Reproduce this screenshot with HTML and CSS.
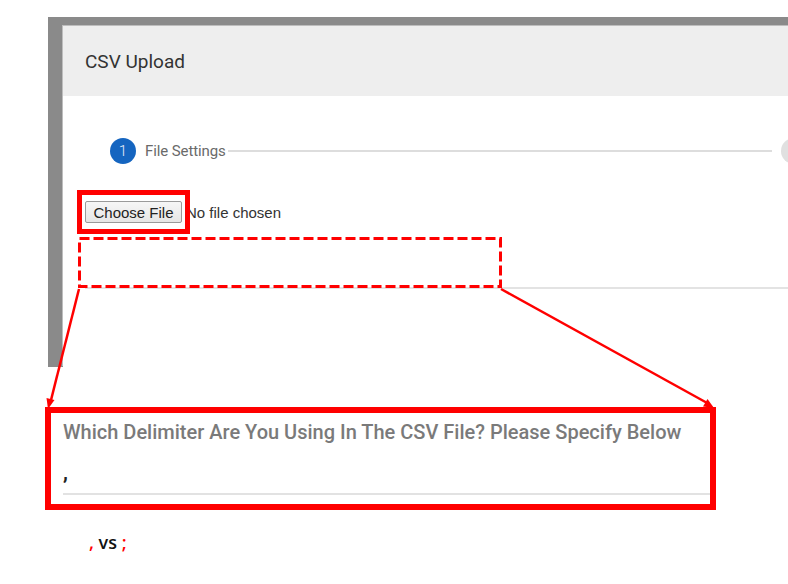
FILE: index.html
```html
<!DOCTYPE html>
<html>
<head>
<meta charset="utf-8">
<link rel="stylesheet" href="styles.css">
</head>
<body>
<div class="canvas">
  <section class="shot">
    <div class="dialog">
      <div class="dialog-header">CSV Upload</div>
      <div class="dialog-body">
        <div class="stepper">
          <span class="step-dot active">1</span>
          <span class="step-label">File Settings</span>
          <span class="step-line"></span>
          <span class="step-dot"></span>
        </div>
        <div class="file-row">
          <button class="file-btn" type="button">Choose File</button>
          <span class="file-status">No file chosen</span>
        </div>
        <div class="field"></div>
      </div>
    </div>
  </section>

  <section class="zoom-panel">
    <div class="zoom-label">Which Delimiter Are You Using In The CSV File? Please Specify Below</div>
    <div class="zoom-input">,</div>
  </section>

  <p class="caption"><span class="red">,</span> vs <span class="red">;</span></p>

  <div class="mark mark-button"></div>
  <svg class="arrows" width="788" height="584" viewBox="0 0 788 584">
    <rect x="79.5" y="238.5" width="421" height="48" fill="none" stroke="#ff0000" stroke-width="3" stroke-dasharray="10 4"/>
    <g stroke="#ff0000" stroke-width="2.5" fill="none">
      <line x1="79" y1="289" x2="50.5" y2="402"/>
      <line x1="501" y1="289" x2="709" y2="404"/>
    </g>
    <g fill="#ff0000">
      <polygon points="48,409 46.5,398 54.5,400"/>
      <polygon points="714,408 703,406.5 707.5,399"/>
    </g>
  </svg>
</div>
</body>
</html>
```

FILE: styles.css
```css
html, body {
  margin: 0;
  padding: 0;
  background: #ffffff;
}

.canvas {
  position: relative;
  width: 788px;
  height: 584px;
  overflow: hidden;
  font-family: Roboto, "Liberation Sans", sans-serif;
}

.shot {
  margin: 17px 0 0 48px;
  height: 350px;
  width: 740px;
  background: #8a8a8a;
  padding: 9px 0 0 15px;
  box-sizing: border-box;
  overflow: hidden;
}

.dialog {
  width: 744px;
  flex: none;
  height: 100%;
  background: #ffffff;
  box-shadow: -1px -1px 0 #bdbdbd;
  display: flex;
  flex-direction: column;
}

.dialog-header {
  height: 70px;
  flex: none;
  background: #eeeeee;
  display: flex;
  align-items: center;
  padding-left: 22px;
  font-size: 19px;
  color: #333333;
}

.dialog-body {
  padding: 42px 0 0 0;
}

.stepper {
  display: flex;
  align-items: center;
  padding-left: 47px;
  height: 26px;
}

.step-dot {
  flex: none;
  width: 26px;
  height: 26px;
  border-radius: 50%;
  background: #e0e0e0;
  color: #e8eef8;
  font-size: 15px;
  display: flex;
  align-items: center;
  justify-content: center;
}

.step-dot.active {
  background: #1565c0;
  font-weight: 300;
}

.step-label {
  margin-left: 9px;
  font-size: 15px;
  color: #6a6a6a;
  letter-spacing: -0.1px;
}

.step-line {
  flex: 1;
  height: 2px;
  background: #dddddd;
  margin: 0 9px 0 2px;
}

.file-row {
  display: flex;
  align-items: center;
  margin-top: 37px;
  padding-left: 22px;
  height: 22px;
}

.file-btn {
  width: 97px;
  height: 22px;
  padding: 0;
  font-family: "Liberation Sans", Arial, sans-serif;
  font-size: 15px;
  color: #222222;
  background: linear-gradient(#f6f6f6, #e6e6e6);
  border: 1px solid #9a9a9a;
  border-radius: 2px;
}

.file-status {
  margin-left: 4px;
  font-family: "Liberation Sans", Arial, sans-serif;
  font-size: 15px;
  color: #333333;
}

.field {
  margin: 14px 0 0 22px;
  height: 50px;
  border-bottom: 2px solid #e3e3e3;
}

.zoom-panel {
  margin: 40px 0 0 45px;
  width: 671px;
  height: 103px;
  box-sizing: border-box;
  border: 6px solid #ff0000;
  padding: 6px 0 0 12px;
}

.zoom-label {
  font-size: 20px;
  line-height: 26px;
  font-weight: 500;
  color: #7a7a7a;
  white-space: nowrap;
}

.zoom-input {
  margin-top: 14px;
  height: 36px;
  box-sizing: border-box;
  border-bottom: 2px solid #e2e2e2;
  font-size: 20px;
  line-height: 26px;
  font-weight: 700;
  color: #222222;
}

.caption {
  margin: 20px 0 0 89px;
  font-family: "Open Sans", "Liberation Sans", sans-serif;
  font-size: 18px;
  line-height: 24px;
  font-weight: 600;
  color: #111111;
}

.caption .red {
  color: #ff0000;
}

.mark {
  position: absolute;
  box-sizing: border-box;
}

.mark-button {
  left: 77px;
  top: 190px;
  width: 113px;
  height: 44px;
  border: 5px solid #ff0000;
}

.arrows {
  position: absolute;
  left: 0;
  top: 0;
  pointer-events: none;
}
```
